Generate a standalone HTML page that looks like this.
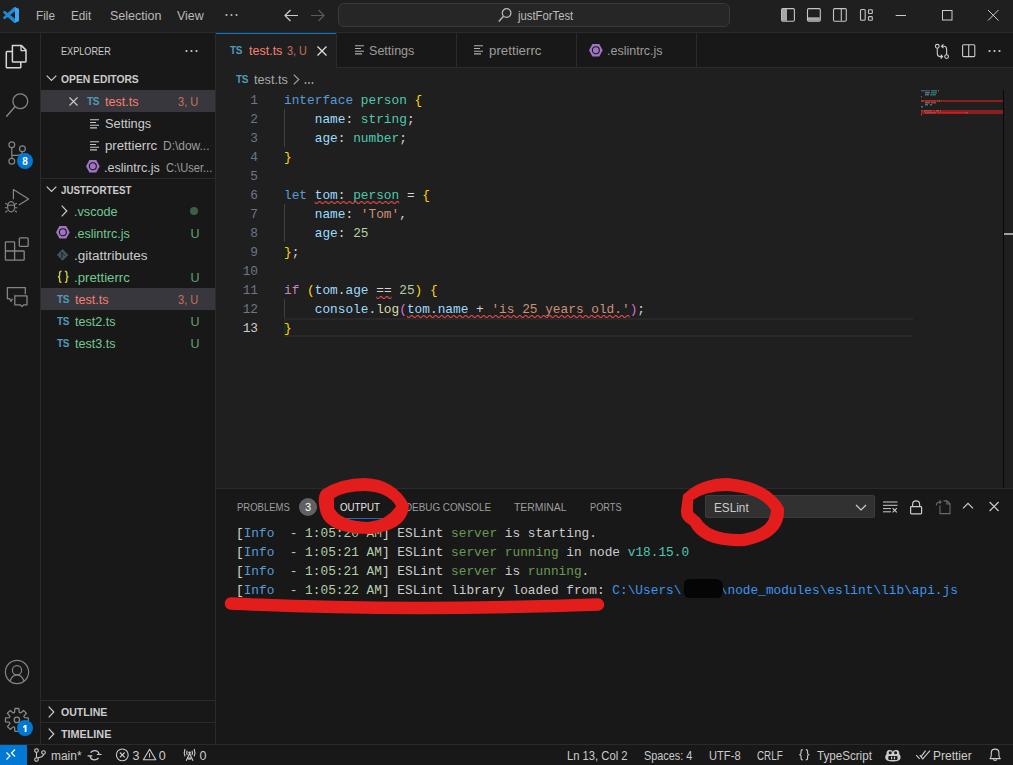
<!DOCTYPE html>
<html><head><meta charset="utf-8">
<style>
*{margin:0;padding:0;box-sizing:border-box}
html,body{width:1013px;height:765px;overflow:hidden;background:#181818;font-family:"Liberation Sans",sans-serif;color:#cccccc}
.a{position:absolute}
.t{position:absolute;white-space:nowrap;font-size:12.5px;line-height:16px}
.mono{position:absolute;font-family:"Liberation Mono",monospace;font-size:12.8px;line-height:19px;white-space:pre}
svg{position:absolute;overflow:visible}
.kw{color:#569cd6}.ty{color:#4ec9b0}.va{color:#9cdcfe}.br{color:#ffd700}.pa{color:#da70d6}.st{color:#ce9178}.nu{color:#b5cea8}.ct{color:#c586c0}.fn{color:#dcdcaa}.op{color:#d4d4d4}
.sq{}
</style></head><body>
<div class="a" style="left:0px;top:0px;width:1013px;height:32px;background:#1f1f1f;"></div>
<div class="a" style="left:0px;top:32px;width:1013px;height:1px;background:#2b2b2b;"></div>
<div class="a" style="left:0px;top:33px;width:40px;height:711px;background:#181818;"></div>
<div class="a" style="left:40px;top:33px;width:1px;height:711px;background:#2b2b2b;"></div>
<div class="a" style="left:41px;top:33px;width:174px;height:711px;background:#181818;"></div>
<div class="a" style="left:215px;top:33px;width:1px;height:711px;background:#2b2b2b;"></div>
<div class="a" style="left:216px;top:33px;width:797px;height:34px;background:#181818;"></div>
<div class="a" style="left:216px;top:67px;width:797px;height:1px;background:#2b2b2b;"></div>
<div class="a" style="left:216px;top:68px;width:797px;height:420px;background:#1f1f1f;"></div>
<div class="a" style="left:216px;top:488px;width:797px;height:1px;background:#2b2b2b;"></div>
<div class="a" style="left:216px;top:489px;width:797px;height:255px;background:#181818;"></div>
<div class="a" style="left:0px;top:744px;width:1013px;height:1px;background:#2b2b2b;"></div>
<div class="a" style="left:0px;top:745px;width:1013px;height:20px;background:#181818;"></div>
<svg style="left:3px;top:7px" width="16" height="16" viewBox="0 0 100 100">
<path d="M96.46 10.8L75.86.87a6.23 6.23 0 0 0-7.1 1.21L29.55 37.85 12.47 24.88a4.16 4.16 0 0 0-5.32.24l-5.48 4.99a4.17 4.17 0 0 0 0 6.16L16.49 50 1.67 63.52a4.17 4.17 0 0 0 0 6.160l5.48 4.99a4.16 4.16 0 0 0 5.32.24l17.08-12.97 39.21 35.78a6.22 6.22 0 0 0 7.1 1.2l20.6-9.92A6.25 6.25 0 0 0 100 83.4V16.6a6.25 6.25 0 0 0-3.54-5.63zM75.02 72.7L45.28 50l29.74-22.7v45.4z" fill="#1f8ad2"/>
<path d="M75.86 .87 L96.46 10.8 A6.25 6.25 0 0 1 100 16.6 V83.4 A6.25 6.25 0 0 1 96.46 89.2 L75.86 99.13 A6.22 6.22 0 0 1 68.76 97.93 A4 4 0 0 0 75.02 94 V6 A4 4 0 0 0 68.76 2.08 A6.23 6.23 0 0 1 75.86 .87Z" fill="#3aa5f0"/>
</svg>
<div id="m_file" class="t" style="left:36.37px;top:7.67px;color:#b9b9b9;font-size:12.5px;font-weight:400;transform:scaleX(0.9409);transform-origin:0 0;">File</div>
<div id="m_edit" class="t" style="left:71.39px;top:7.67px;color:#b9b9b9;font-size:12.5px;font-weight:400;transform:scaleX(0.9365);transform-origin:0 0;">Edit</div>
<div id="m_sel" class="t" style="left:109.90px;top:7.67px;color:#b9b9b9;font-size:12.5px;font-weight:400;transform:scaleX(1.0002);transform-origin:0 0;">Selection</div>
<div id="m_view" class="t" style="left:177.41px;top:7.67px;color:#b9b9b9;font-size:12.5px;font-weight:400;transform:scaleX(0.9932);transform-origin:0 0;">View</div>
<svg style="left:225px;top:13px" width="14" height="4" viewBox="0 0 14 4"><circle cx="1.5" cy="2" r="1.1" fill="#b9b9b9"/><circle cx="6.5" cy="2" r="1.1" fill="#b9b9b9"/><circle cx="11.5" cy="2" r="1.1" fill="#b9b9b9"/></svg>
<svg style="left:284px;top:9px" width="15" height="13" viewBox="0 0 15 13"><path d="M6.5 1 L1 6.5 L6.5 12 M1 6.5 H14" stroke="#cccccc" stroke-width="1.2" fill="none"/></svg>
<svg style="left:310px;top:9px" width="15" height="13" viewBox="0 0 15 13"><path d="M8.5 1 L14 6.5 L8.5 12 M14 6.5 H1" stroke="#5a5a5a" stroke-width="1.2" fill="none"/></svg>
<div class="a" style="left:338px;top:3px;width:392px;height:24px;background:#262626;border:1px solid #3a3a3a;border-radius:6px;box-sizing:border-box"></div>
<svg style="left:498px;top:8px" width="14" height="14" viewBox="0 0 14 14"><circle cx="8.6" cy="5" r="4.3" stroke="#bbbbbb" stroke-width="1.2" fill="none"/><path d="M5.5 8.2 L0.8 13.5" stroke="#bbbbbb" stroke-width="1.4"/></svg>
<div id="cc" class="t" style="left:517.87px;top:7.67px;color:#bdbdbd;font-size:12.5px;font-weight:400;transform:scaleX(0.9032);transform-origin:0 0;">justForTest</div>
<svg style="left:0;top:0" width="1013" height="40" fill="none"><rect x="781.6" y="8.6" width="12.8" height="12.6" rx="1.2" stroke="#c5c5c5" stroke-width="1.1"/><rect x="782" y="9" width="5" height="11.8" fill="#a8a8a8"/><rect x="807.5" y="8.6" width="12.8" height="12.6" rx="1.2" stroke="#c5c5c5" stroke-width="1.1"/><rect x="808" y="17.3" width="11.8" height="3.5" fill="#a8a8a8"/><rect x="833.5" y="8.6" width="12.8" height="12.6" rx="1.2" stroke="#c5c5c5" stroke-width="1.1"/><path d="M841.3 9 V20.8" stroke="#c5c5c5" stroke-width="1.1"/><rect x="860.5" y="9.5" width="4.7" height="10.8" rx="1" stroke="#c5c5c5" stroke-width="1.1"/><rect x="868.5" y="9.8" width="3.8" height="3.7" rx="0.8" stroke="#c5c5c5" stroke-width="1.1"/><rect x="868.5" y="16.6" width="3.8" height="3.7" rx="0.8" stroke="#c5c5c5" stroke-width="1.1"/></svg>
<svg style="left:0;top:0" width="1013" height="40" fill="none"><path d="M895.7 15.5 H906" stroke="#cccccc" stroke-width="1"/><rect x="942.5" y="10.5" width="9.5" height="9.5" stroke="#cccccc" stroke-width="1"/><path d="M988 10 L998.5 20.5 M998.5 10 L988 20.5" stroke="#cccccc" stroke-width="1"/></svg>
<svg style="left:0;top:0" width="41" height="765" viewBox="0 0 41 765" fill="none" stroke-linejoin="round">
<path d="M12.4 45.6 H21.5 L26 50.1 V61.2 Q26 62 25.2 62 H13.2 Q12.4 62 12.4 61.2 Z" stroke="#d7d7d7" stroke-width="1.5"/>
<path d="M21 45.6 V50.6 H26" stroke="#d7d7d7" stroke-width="1.3"/>
<path d="M12.4 51.6 H7.1 Q6.3 51.6 6.3 52.4 V67 Q6.3 67.8 7.1 67.8 H20 Q20.8 67.8 20.8 67 V62" stroke="#d7d7d7" stroke-width="1.5"/>
<circle cx="20.3" cy="101.2" r="7.4" stroke="#858585" stroke-width="1.3"/>
<path d="M14.9 106.8 L6.6 116.2" stroke="#858585" stroke-width="1.4" stroke-linecap="round"/>
<circle cx="11.8" cy="144.7" r="2.9" stroke="#858585" stroke-width="1.2"/>
<circle cx="11.8" cy="161.2" r="2.9" stroke="#858585" stroke-width="1.2"/>
<circle cx="22.4" cy="148.8" r="2.9" stroke="#858585" stroke-width="1.2"/>
<path d="M11.8 147.6 V158.3 M22.4 151.7 Q22.4 155.3 17 155.3 H12" stroke="#858585" stroke-width="1.2"/>
<path d="M13.4 199.3 V189.6 L28.6 199 L18.9 205.1" stroke="#858585" stroke-width="1.2"/>
<ellipse cx="11.1" cy="206.7" rx="3.5" ry="5.1" stroke="#858585" stroke-width="1.2"/>
<path d="M7.7 205.3 H14.5 M5.3 203.2 L7.6 204.5 M4.9 207.8 H7.5 M5.3 212.3 L7.6 210.6 M16.9 203.2 L14.6 204.5 M17.3 207.8 H14.7 M16.9 212.3 L14.6 210.6" stroke="#858585" stroke-width="1.1"/>
<path d="M6.2 241.8 H13.8 Q14.6 241.8 14.6 242.6 V251 H23.4 Q24.2 251 24.2 251.8 V259.4 Q24.2 260.2 23.4 260.2 H6.2 Q5.4 260.2 5.4 259.4 V242.6 Q5.4 241.8 6.2 241.8 Z M5.4 251 H14.6 V260.2" stroke="#858585" stroke-width="1.3"/>
<rect x="19.3" y="237.8" width="8.9" height="8.6" rx="1" stroke="#858585" stroke-width="1.3"/>
<path d="M14.3 294.5 V294.8 M25.3 294.3 V287.6 H7.4 V298.7 H9.6 L10.9 301.3 L12.5 298.7" stroke="#858585" stroke-width="1.3"/>
<path d="M14.8 295.8 H27 V304.8 H23.8 L22 306.6 L20.2 304.8 H14.8 Z" stroke="#858585" stroke-width="1.3"/>
<circle cx="17" cy="672" r="11.6" stroke="#858585" stroke-width="1.2"/>
<circle cx="17" cy="670.3" r="4.6" stroke="#858585" stroke-width="1.2"/>
<path d="M10 681.3 Q12 674.8 17 674.8 Q22 674.8 24 681.3" stroke="#858585" stroke-width="1.2"/>
<path d="M14.59 712.35 L14.89 708.48 L18.91 708.48 L19.21 712.35 L20.61 712.92 L23.55 710.40 L26.40 713.25 L23.88 716.19 L24.45 717.59 L28.32 717.89 L28.32 721.91 L24.45 722.21 L23.88 723.61 L26.40 726.55 L23.55 729.40 L20.61 726.88 L19.21 727.45 L18.91 731.32 L14.89 731.32 L14.59 727.45 L13.19 726.88 L10.25 729.40 L7.40 726.55 L9.92 723.61 L9.35 722.21 L5.48 721.91 L5.48 717.89 L9.35 717.59 L9.92 716.19 L7.40 713.25 L10.25 710.40 L13.19 712.92 Z" stroke="#858585" stroke-width="1.3"/>
<circle cx="16.9" cy="719.9" r="2.7" stroke="#858585" stroke-width="1.3"/>
</svg>
<div class="a" style="left:17px;top:153px;width:16px;height:16px;border-radius:8px;background:#0078d4;color:#fff;font-size:10px;font-weight:bold;text-align:center;line-height:17px">8</div>
<svg style="left:0;top:0" width="41" height="765"><circle cx="25" cy="728" r="8" fill="#0078d4"/><path d="M24.7 725.1 H26.5 V732 H24.7 V727.2 L23.2 728 V726.4 Z" fill="#ffffff"/></svg>
<div id="s_expl" class="t" style="left:60.95px;top:43.19px;color:#cccccc;font-size:11px;font-weight:400;transform:scaleX(0.8301);transform-origin:0 0;">EXPLORER</div>
<svg style="left:185px;top:49px" width="14" height="4" viewBox="0 0 14 4"><circle cx="1.5" cy="2" r="1.1" fill="#cccccc"/><circle cx="6.5" cy="2" r="1.1" fill="#cccccc"/><circle cx="11.5" cy="2" r="1.1" fill="#cccccc"/></svg>
<svg style="left:46px;top:75px" width="11" height="7" viewBox="0 0 11 7"><path d="M0.7 0.7 L5.5 5.5 L10.3 0.7" stroke="#cccccc" stroke-width="1.2" fill="none"/></svg>
<div id="s_oe" class="t" style="left:60.92px;top:71.19px;color:#cccccc;font-size:11px;font-weight:700;transform:scaleX(0.9374);transform-origin:0 0;">OPEN EDITORS</div>
<div class="a" style="left:41px;top:90px;width:174px;height:22px;background:#37373d;"></div>
<svg style="left:69px;top:97px" width="9" height="9" viewBox="0 0 9 9"><path d="M0.5 0.5 L8.5 8.5 M8.5 0.5 L0.5 8.5" stroke="#cccccc" stroke-width="1.1"/></svg>
<div class="a" style="left:87px;top:96px;font-size:10px;font-weight:bold;color:#519aba;letter-spacing:-0.4px;line-height:12px">TS</div>
<div id="s_r1" class="t" style="left:104.89px;top:93.67px;color:#f88070;font-size:12.5px;font-weight:400;transform:scaleX(1.0062);transform-origin:0 0;">test.ts</div>
<div id="s_r1b" class="t" style="left:178.47px;top:93.67px;color:#c9705f;font-size:12.5px;font-weight:400;transform:scaleX(0.8832);transform-origin:0 0;">3, U</div>
<svg style="left:90px;top:119px" width="10" height="10" viewBox="0 0 10 10"><path d="M0 0.8 H9 M0 3.5 H6 M0 6.2 H9 M0 8.9 H7" stroke="#c5c5c5" stroke-width="1.1"/></svg>
<div id="s_r2" class="t" style="left:105.39px;top:115.67px;color:#cccccc;font-size:12.5px;font-weight:400;transform:scaleX(1.0222);transform-origin:0 0;">Settings</div>
<svg style="left:90px;top:141px" width="10" height="10" viewBox="0 0 10 10"><path d="M0 0.8 H9 M0 3.5 H6 M0 6.2 H9 M0 8.9 H7" stroke="#c5c5c5" stroke-width="1.1"/></svg>
<div id="s_r3" class="t" style="left:105.39px;top:137.67px;color:#cccccc;font-size:12.5px;font-weight:400;transform:scaleX(1.0573);transform-origin:0 0;">prettierrc</div>
<div id="s_r3d" class="t" style="left:163.41px;top:137.84px;color:#9d9d9d;font-size:12px;font-weight:400;transform:scaleX(0.9959);transform-origin:0 0;">D:\dow...</div>
<svg style="left:86px;top:160px" width="14" height="13" viewBox="0 0 14 13"><path d="M3.4 0 H10.3 L13.7 6.2 L10.3 12.4 H3.4 L0 6.2 Z" fill="#a074c4" /><circle cx="6.85" cy="6.2" r="3.5" fill="none" stroke="#181818" stroke-width="1.1"/></svg>
<div id="s_r4" class="t" style="left:104.38px;top:159.67px;color:#cccccc;font-size:12.5px;font-weight:400;transform:scaleX(1.0038);transform-origin:0 0;">.eslintrc.js</div>
<div id="s_r4d" class="t" style="left:166.49px;top:159.84px;color:#9d9d9d;font-size:12px;font-weight:400;transform:scaleX(0.9248);transform-origin:0 0;">C:\User...</div>
<div class="a" style="left:41px;top:178px;width:174px;height:1px;background:#2b2b2b;"></div>
<svg style="left:46px;top:186px" width="11" height="7" viewBox="0 0 11 7"><path d="M0.7 0.7 L5.5 5.5 L10.3 0.7" stroke="#cccccc" stroke-width="1.2" fill="none"/></svg>
<div id="s_jft" class="t" style="left:61.47px;top:182.19px;color:#cccccc;font-size:11px;font-weight:700;transform:scaleX(0.8862);transform-origin:0 0;">JUSTFORTEST</div>
<svg style="left:61px;top:205px" width="7" height="12" viewBox="0 0 7 12"><path d="M0.7 0.7 L5.8 6 L0.7 11.3" stroke="#cccccc" stroke-width="1.2" fill="none"/></svg>
<div id="s_t1" class="t" style="left:73.90px;top:203.67px;color:#73c991;font-size:12.5px;font-weight:400;transform:scaleX(1.0098);transform-origin:0 0;">.vscode</div>
<div class="a" style="left:190px;top:207px;width:8px;height:8px;background:#3a5f46;border-radius:4px"></div>
<svg style="left:56px;top:226px" width="14" height="13" viewBox="0 0 14 13"><path d="M3.4 0 H10.3 L13.7 6.2 L10.3 12.4 H3.4 L0 6.2 Z" fill="#a074c4" /><circle cx="6.85" cy="6.2" r="3.5" fill="none" stroke="#181818" stroke-width="1.1"/></svg>
<div id="s_t2" class="t" style="left:74.38px;top:225.67px;color:#73c991;font-size:12.5px;font-weight:400;transform:scaleX(1.0038);transform-origin:0 0;">.eslintrc.js</div>
<div id="s_t2b" class="t" style="left:190.40px;top:225.67px;color:#5fa275;font-size:12.5px;font-weight:400;">U</div>
<svg style="left:0;top:0" width="100" height="300"><path d="M62.6 249 L68.4 254.9 L62.6 260.8 L56.8 254.9 Z" fill="#41535b"/><path d="M61.8 252 V258 M62.2 253 L64.8 255.6" stroke="#181818" stroke-width="0.9"/></svg>
<div id="s_t3" class="t" style="left:74.32px;top:247.67px;color:#cccccc;font-size:12.5px;font-weight:400;transform:scaleX(1.0793);transform-origin:0 0;">.gitattributes</div>
<svg style="left:0;top:0" width="100" height="300" fill="none"><path d="M61.5 271.3 Q59.6 271.3 59.6 273.2 V275.4 Q59.6 276.8 57.9 276.8 Q59.6 276.8 59.6 278.2 V280.5 Q59.6 282.4 61.5 282.4 M64.9 271.3 Q66.8 271.3 66.8 273.2 V275.4 Q66.8 276.8 68.5 276.8 Q66.8 276.8 66.8 278.2 V280.5 Q66.8 282.4 64.9 282.4" stroke="#cbcb41" stroke-width="1.4"/></svg>
<div id="s_t4" class="t" style="left:74.36px;top:269.67px;color:#73c991;font-size:12.5px;font-weight:400;transform:scaleX(1.0580);transform-origin:0 0;">.prettierrc</div>
<div id="s_t4b" class="t" style="left:190.40px;top:269.67px;color:#5fa275;font-size:12.5px;font-weight:400;">U</div>
<div class="a" style="left:41px;top:288px;width:174px;height:22px;background:#37373d;"></div>
<div class="a" style="left:57px;top:294px;font-size:10px;font-weight:bold;color:#519aba;letter-spacing:-0.4px;line-height:12px">TS</div>
<div id="s_t5" class="t" style="left:75.39px;top:291.67px;color:#f88070;font-size:12.5px;font-weight:400;transform:scaleX(1.0062);transform-origin:0 0;">test.ts</div>
<div id="s_t5b" class="t" style="left:178.47px;top:291.67px;color:#c9705f;font-size:12.5px;font-weight:400;transform:scaleX(0.8832);transform-origin:0 0;">3, U</div>
<div class="a" style="left:57px;top:316px;font-size:10px;font-weight:bold;color:#519aba;letter-spacing:-0.4px;line-height:12px">TS</div>
<div id="s_t6" class="t" style="left:75.40px;top:313.67px;color:#73c991;font-size:12.5px;font-weight:400;transform:scaleX(1.0051);transform-origin:0 0;">test2.ts</div>
<div id="s_t6b" class="t" style="left:190.40px;top:313.67px;color:#5fa275;font-size:12.5px;font-weight:400;">U</div>
<div class="a" style="left:57px;top:338px;font-size:10px;font-weight:bold;color:#519aba;letter-spacing:-0.4px;line-height:12px">TS</div>
<div id="s_t7" class="t" style="left:75.40px;top:335.67px;color:#73c991;font-size:12.5px;font-weight:400;transform:scaleX(1.0051);transform-origin:0 0;">test3.ts</div>
<div id="s_t7b" class="t" style="left:190.40px;top:335.67px;color:#5fa275;font-size:12.5px;font-weight:400;">U</div>
<div class="a" style="left:41px;top:700px;width:174px;height:1px;background:#2b2b2b;"></div>
<svg style="left:48px;top:706px" width="7" height="12" viewBox="0 0 7 12"><path d="M0.7 0.7 L5.8 6 L0.7 11.3" stroke="#cccccc" stroke-width="1.2" fill="none"/></svg>
<div id="s_outl" class="t" style="left:61.39px;top:704.19px;color:#cccccc;font-size:11px;font-weight:700;transform:scaleX(0.9597);transform-origin:0 0;">OUTLINE</div>
<div class="a" style="left:41px;top:722px;width:174px;height:1px;background:#2b2b2b;"></div>
<svg style="left:48px;top:728px" width="7" height="12" viewBox="0 0 7 12"><path d="M0.7 0.7 L5.8 6 L0.7 11.3" stroke="#cccccc" stroke-width="1.2" fill="none"/></svg>
<div id="s_tl" class="t" style="left:61.39px;top:726.19px;color:#cccccc;font-size:11px;font-weight:700;transform:scaleX(0.9811);transform-origin:0 0;">TIMELINE</div>
<div class="a" style="left:216px;top:33px;width:120px;height:35px;background:#1f1f1f;border-top:1px solid #0078d4;box-sizing:border-box"></div>
<div class="a" style="left:336px;top:33px;width:1px;height:34px;background:#2b2b2b;"></div>
<div class="a" style="left:456px;top:33px;width:1px;height:34px;background:#2b2b2b;"></div>
<div class="a" style="left:576px;top:33px;width:1px;height:34px;background:#2b2b2b;"></div>
<div class="a" style="left:696px;top:33px;width:1px;height:34px;background:#2b2b2b;"></div>
<div class="a" style="left:230px;top:45px;font-size:10px;font-weight:bold;color:#519aba;letter-spacing:-0.4px;line-height:12px">TS</div>
<div id="tab1" class="t" style="left:248.88px;top:43.37px;color:#f88070;font-size:12.5px;font-weight:400;transform:scaleX(1.0006);transform-origin:0 0;">test.ts</div>
<div id="tab1b" class="t" style="left:287.44px;top:43.37px;color:#c9705f;font-size:12.5px;font-weight:400;transform:scaleX(0.8658);transform-origin:0 0;">3, U</div>
<svg style="left:317px;top:46px" width="10" height="10" viewBox="0 0 10 10"><path d="M0.5 0.5 L9.5 9.5 M9.5 0.5 L0.5 9.5" stroke="#e0e0e0" stroke-width="1.3"/></svg>
<svg style="left:355px;top:45px" width="10" height="10" viewBox="0 0 10 10"><path d="M0 0.8 H9 M0 3.5 H6 M0 6.2 H9 M0 8.9 H7" stroke="#b0b0b0" stroke-width="1.1"/></svg>
<div id="tab2" class="t" style="left:368.90px;top:43.37px;color:#9d9d9d;font-size:12.5px;font-weight:400;transform:scaleX(1.0047);transform-origin:0 0;">Settings</div>
<svg style="left:474px;top:45px" width="10" height="10" viewBox="0 0 10 10"><path d="M0 0.8 H9 M0 3.5 H6 M0 6.2 H9 M0 8.9 H7" stroke="#b0b0b0" stroke-width="1.1"/></svg>
<div id="tab3" class="t" style="left:489.42px;top:43.37px;color:#9d9d9d;font-size:12.5px;font-weight:400;transform:scaleX(1.0646);transform-origin:0 0;">prettierrc</div>
<svg style="left:589px;top:44px" width="14" height="13" viewBox="0 0 14 13"><path d="M3.4 0 H10.3 L13.7 6.2 L10.3 12.4 H3.4 L0 6.2 Z" fill="#a074c4" /><circle cx="6.85" cy="6.2" r="3.5" fill="none" stroke="#181818" stroke-width="1.1"/></svg>
<div id="tab4" class="t" style="left:607.41px;top:43.37px;color:#9d9d9d;font-size:12.5px;font-weight:400;transform:scaleX(1.0003);transform-origin:0 0;">.eslintrc.js</div>
<svg style="left:0;top:0" width="1013" height="100" fill="none"><circle cx="937.3" cy="46.3" r="1.9" stroke="#cccccc" stroke-width="1.1"/><circle cx="946.6" cy="56.6" r="1.9" stroke="#cccccc" stroke-width="1.1"/><path d="M937.3 48.2 V53.6 Q937.3 56.6 939.9 56.6 H942.6 M940.7 54.7 L942.6 56.6 L940.7 58.5 M946.6 54.7 V49.3 Q946.6 46.3 944 46.3 H941.5 M943.4 44.4 L941.5 46.3 L943.4 48.2" stroke="#cccccc" stroke-width="1.1"/><rect x="962.6" y="44.7" width="12.2" height="11.9" rx="1" stroke="#cccccc" stroke-width="1.1"/><path d="M968.7 45 V56.4" stroke="#cccccc" stroke-width="1.1"/></svg>
<svg style="left:987.6px;top:48.8px" width="14" height="4" viewBox="0 0 14 4"><circle cx="1.5" cy="2" r="1.1" fill="#cccccc"/><circle cx="6.5" cy="2" r="1.1" fill="#cccccc"/><circle cx="11.5" cy="2" r="1.1" fill="#cccccc"/></svg>
<div class="a" style="left:236px;top:74px;font-size:10px;font-weight:bold;color:#519aba;letter-spacing:-0.4px;line-height:12px">TS</div>
<div id="bc1" class="t" style="left:254.42px;top:71.67px;color:#a9a9a9;font-size:12.5px;font-weight:400;transform:scaleX(1.0125);transform-origin:0 0;">test.ts</div>
<svg style="left:293px;top:74px" width="7" height="11" viewBox="0 0 7 11"><path d="M0.7 0.7 L5.8 5.5 L0.7 10.3" stroke="#a9a9a9" stroke-width="1.1" fill="none"/></svg>
<svg style="left:304px;top:81px" width="14" height="4" viewBox="0 0 14 4"><circle cx="1.5" cy="2" r="0.9" fill="#a9a9a9"/><circle cx="5.0" cy="2" r="0.9" fill="#a9a9a9"/><circle cx="8.5" cy="2" r="0.9" fill="#a9a9a9"/></svg>
<div class="a" style="left:284px;top:318px;width:629px;height:19px;border:2px solid #282828;border-right:none"></div>
<div class="a" style="left:284px;top:109px;width:1px;height:38px;background:#404040;"></div>
<div class="a" style="left:284px;top:204px;width:1px;height:38px;background:#404040;"></div>
<div class="a" style="left:284px;top:299px;width:1px;height:19px;background:#404040;"></div>
<div class="mono" style="left:216px;top:91px;width:42px;text-align:right;color:#6e7681">1</div>
<div class="mono" style="left:284px;top:91px"><span class="kw">interface</span> <span class="ty">person</span> <span class="br">{</span></div>
<div class="mono" style="left:216px;top:110px;width:42px;text-align:right;color:#6e7681">2</div>
<div class="mono" style="left:284px;top:110px">    <span class="va">name</span><span class="op">:</span> <span class="ty">string</span><span class="op">;</span></div>
<div class="mono" style="left:216px;top:129px;width:42px;text-align:right;color:#6e7681">3</div>
<div class="mono" style="left:284px;top:129px">    <span class="va">age</span><span class="op">:</span> <span class="ty">number</span><span class="op">;</span></div>
<div class="mono" style="left:216px;top:148px;width:42px;text-align:right;color:#6e7681">4</div>
<div class="mono" style="left:284px;top:148px"><span class="br">}</span></div>
<div class="mono" style="left:216px;top:167px;width:42px;text-align:right;color:#6e7681">5</div>
<div class="mono" style="left:284px;top:167px"></div>
<div class="mono" style="left:216px;top:186px;width:42px;text-align:right;color:#6e7681">6</div>
<div class="mono" style="left:284px;top:186px"><span class="kw">let</span> <span class="sq"><span class="va">tom</span><span class="op">:</span> <span class="ty">person</span></span> <span class="op">=</span> <span class="br">{</span></div>
<div class="mono" style="left:216px;top:205px;width:42px;text-align:right;color:#6e7681">7</div>
<div class="mono" style="left:284px;top:205px">    <span class="va">name</span><span class="op">:</span> <span class="st">'Tom'</span><span class="op">,</span></div>
<div class="mono" style="left:216px;top:224px;width:42px;text-align:right;color:#6e7681">8</div>
<div class="mono" style="left:284px;top:224px">    <span class="va">age</span><span class="op">:</span> <span class="nu">25</span></div>
<div class="mono" style="left:216px;top:243px;width:42px;text-align:right;color:#6e7681">9</div>
<div class="mono" style="left:284px;top:243px"><span class="br">}</span><span class="op">;</span></div>
<div class="mono" style="left:216px;top:262px;width:42px;text-align:right;color:#6e7681">10</div>
<div class="mono" style="left:284px;top:262px"></div>
<div class="mono" style="left:216px;top:281px;width:42px;text-align:right;color:#6e7681">11</div>
<div class="mono" style="left:284px;top:281px"><span class="ct">if</span> <span class="br">(</span><span class="va">tom</span><span class="op">.</span><span class="va">age</span> <span class="sq"><span class="op">==</span></span> <span class="nu">25</span><span class="br">)</span> <span class="br">{</span></div>
<div class="mono" style="left:216px;top:300px;width:42px;text-align:right;color:#6e7681">12</div>
<div class="mono" style="left:284px;top:300px">    <span class="va">console</span><span class="op">.</span><span class="fn">log</span><span class="pa">(</span><span class="sq"><span class="va">tom</span><span class="op">.</span><span class="va">name</span> <span class="op">+</span> <span class="st">'is 25 years old.'</span></span><span class="pa">)</span><span class="op">;</span></div>
<div class="mono" style="left:216px;top:319px;width:42px;text-align:right;color:#cccccc">13</div>
<div class="mono" style="left:284px;top:319px"><span class="br">}</span></div>
<svg style="left:0;top:0" width="1013" height="765"><defs><pattern id="sqp" x="0" y="0" width="6" height="3" patternUnits="userSpaceOnUse"><polygon points="5.5,0 2.5,3 1.1,3 4.1,0" fill="#f14c4c"/><polygon points="4,0 6,2 6,0.6 5.4,0" fill="#f14c4c"/><polygon points="0,2 1,3 2.4,3 0,0.6" fill="#f14c4c"/></pattern></defs><g transform="translate(314.7,201)"><rect x="0" y="0" width="84.5" height="3" fill="url(#sqp)"/></g><g transform="translate(376.2,296)"><rect x="0" y="0" width="15.4" height="3" fill="url(#sqp)"/></g><g transform="translate(406.9,315)"><rect x="0" y="0" width="222.7" height="3" fill="url(#sqp)"/></g></svg>
<div class="a" style="left:921px;top:100px;width:82px;height:2px;background:#8b1f1f;"></div>
<div class="a" style="left:921px;top:110px;width:82px;height:4px;background:#8b1f1f;"></div>
<div class="a" style="left:921px;top:90px;width:9px;height:1px;background:#3f6a94;opacity:0.75"></div>
<div class="a" style="left:921px;top:91px;width:9px;height:1px;background:#3f6a94;opacity:0.35"></div>
<div class="a" style="left:931px;top:90px;width:6px;height:1px;background:#3a8a78;opacity:0.75"></div>
<div class="a" style="left:931px;top:91px;width:6px;height:1px;background:#3a8a78;opacity:0.35"></div>
<div class="a" style="left:938px;top:90px;width:1px;height:1px;background:#8f8a40;opacity:0.75"></div>
<div class="a" style="left:938px;top:91px;width:1px;height:1px;background:#8f8a40;opacity:0.35"></div>
<div class="a" style="left:925px;top:92px;width:4px;height:1px;background:#6890a8;opacity:0.75"></div>
<div class="a" style="left:925px;top:93px;width:4px;height:1px;background:#6890a8;opacity:0.35"></div>
<div class="a" style="left:929px;top:92px;width:1px;height:1px;background:#777;opacity:0.75"></div>
<div class="a" style="left:929px;top:93px;width:1px;height:1px;background:#777;opacity:0.35"></div>
<div class="a" style="left:931px;top:92px;width:6px;height:1px;background:#3a8a78;opacity:0.75"></div>
<div class="a" style="left:931px;top:93px;width:6px;height:1px;background:#3a8a78;opacity:0.35"></div>
<div class="a" style="left:925px;top:94px;width:3px;height:1px;background:#6890a8;opacity:0.75"></div>
<div class="a" style="left:925px;top:95px;width:3px;height:1px;background:#6890a8;opacity:0.35"></div>
<div class="a" style="left:928px;top:94px;width:1px;height:1px;background:#777;opacity:0.75"></div>
<div class="a" style="left:928px;top:95px;width:1px;height:1px;background:#777;opacity:0.35"></div>
<div class="a" style="left:930px;top:94px;width:6px;height:1px;background:#3a8a78;opacity:0.75"></div>
<div class="a" style="left:930px;top:95px;width:6px;height:1px;background:#3a8a78;opacity:0.35"></div>
<div class="a" style="left:921px;top:96px;width:1px;height:1px;background:#8f8a40;opacity:0.75"></div>
<div class="a" style="left:921px;top:97px;width:1px;height:1px;background:#8f8a40;opacity:0.35"></div>
<div class="a" style="left:921px;top:100px;width:3px;height:1px;background:#b04040;opacity:0.75"></div>
<div class="a" style="left:921px;top:101px;width:3px;height:1px;background:#b04040;opacity:0.35"></div>
<div class="a" style="left:925px;top:100px;width:11px;height:1px;background:#e02020;opacity:0.75"></div>
<div class="a" style="left:925px;top:101px;width:11px;height:1px;background:#e02020;opacity:0.35"></div>
<div class="a" style="left:937px;top:100px;width:1px;height:1px;background:#a05050;opacity:0.75"></div>
<div class="a" style="left:937px;top:101px;width:1px;height:1px;background:#a05050;opacity:0.35"></div>
<div class="a" style="left:939px;top:100px;width:1px;height:1px;background:#a08030;opacity:0.75"></div>
<div class="a" style="left:939px;top:101px;width:1px;height:1px;background:#a08030;opacity:0.35"></div>
<div class="a" style="left:925px;top:102px;width:4px;height:1px;background:#6890a8;opacity:0.75"></div>
<div class="a" style="left:925px;top:103px;width:4px;height:1px;background:#6890a8;opacity:0.35"></div>
<div class="a" style="left:929px;top:102px;width:1px;height:1px;background:#777;opacity:0.75"></div>
<div class="a" style="left:929px;top:103px;width:1px;height:1px;background:#777;opacity:0.35"></div>
<div class="a" style="left:931px;top:102px;width:5px;height:1px;background:#9a6a50;opacity:0.75"></div>
<div class="a" style="left:931px;top:103px;width:5px;height:1px;background:#9a6a50;opacity:0.35"></div>
<div class="a" style="left:925px;top:104px;width:3px;height:1px;background:#6890a8;opacity:0.75"></div>
<div class="a" style="left:925px;top:105px;width:3px;height:1px;background:#6890a8;opacity:0.35"></div>
<div class="a" style="left:930px;top:104px;width:2px;height:1px;background:#7a8a6a;opacity:0.75"></div>
<div class="a" style="left:930px;top:105px;width:2px;height:1px;background:#7a8a6a;opacity:0.35"></div>
<div class="a" style="left:921px;top:106px;width:2px;height:1px;background:#8f8a40;opacity:0.75"></div>
<div class="a" style="left:921px;top:107px;width:2px;height:1px;background:#8f8a40;opacity:0.35"></div>
<div class="a" style="left:921px;top:110px;width:2px;height:1px;background:#a04060;opacity:0.75"></div>
<div class="a" style="left:921px;top:111px;width:2px;height:1px;background:#a04060;opacity:0.35"></div>
<div class="a" style="left:924px;top:110px;width:1px;height:1px;background:#a08030;opacity:0.75"></div>
<div class="a" style="left:924px;top:111px;width:1px;height:1px;background:#a08030;opacity:0.35"></div>
<div class="a" style="left:925px;top:110px;width:7px;height:1px;background:#b05050;opacity:0.75"></div>
<div class="a" style="left:925px;top:111px;width:7px;height:1px;background:#b05050;opacity:0.35"></div>
<div class="a" style="left:933px;top:110px;width:2px;height:1px;background:#e02020;opacity:0.75"></div>
<div class="a" style="left:933px;top:111px;width:2px;height:1px;background:#e02020;opacity:0.35"></div>
<div class="a" style="left:936px;top:110px;width:3px;height:1px;background:#b06050;opacity:0.75"></div>
<div class="a" style="left:936px;top:111px;width:3px;height:1px;background:#b06050;opacity:0.35"></div>
<div class="a" style="left:940px;top:110px;width:1px;height:1px;background:#a08030;opacity:0.75"></div>
<div class="a" style="left:940px;top:111px;width:1px;height:1px;background:#a08030;opacity:0.35"></div>
<div class="a" style="left:925px;top:112px;width:11px;height:1px;background:#b05050;opacity:0.75"></div>
<div class="a" style="left:925px;top:113px;width:11px;height:1px;background:#b05050;opacity:0.35"></div>
<div class="a" style="left:937px;top:112px;width:29px;height:1px;background:#e02020;opacity:0.75"></div>
<div class="a" style="left:937px;top:113px;width:29px;height:1px;background:#e02020;opacity:0.35"></div>
<div class="a" style="left:966px;top:112px;width:2px;height:1px;background:#a06060;opacity:0.75"></div>
<div class="a" style="left:966px;top:113px;width:2px;height:1px;background:#a06060;opacity:0.35"></div>
<div class="a" style="left:921px;top:114px;width:1px;height:1px;background:#8f8a40;opacity:0.75"></div>
<div class="a" style="left:921px;top:115px;width:1px;height:1px;background:#8f8a40;opacity:0.35"></div>
<div class="a" style="left:1003px;top:90px;width:1px;height:398px;background:#06080b;"></div>
<div class="a" style="left:1004px;top:233px;width:9px;height:2px;background:#a0a0a0;"></div>
<div id="p_prob" class="t" style="left:236.93px;top:499.19px;color:#9d9d9d;font-size:11px;font-weight:400;transform:scaleX(0.8639);transform-origin:0 0;">PROBLEMS</div>
<div class="a" style="left:299px;top:498px;width:18px;height:18px;border-radius:9px;background:#616161;color:#fff;font-size:11px;text-align:center;line-height:18px">3</div>
<div id="p_out" class="t" style="left:340.00px;top:499.19px;color:#e7e7e7;font-size:11px;font-weight:400;transform:scaleX(0.8850);transform-origin:0 0;">OUTPUT</div>
<div class="a" style="left:338px;top:518px;width:45px;height:1px;background:#0078d4;"></div>
<div id="p_dbg" class="t" style="left:405.00px;top:499.19px;color:#9d9d9d;font-size:11px;font-weight:400;transform:scaleX(0.8960);transform-origin:0 0;">DEBUG CONSOLE</div>
<div id="p_term" class="t" style="left:514.43px;top:499.19px;color:#9d9d9d;font-size:11px;font-weight:400;transform:scaleX(0.9455);transform-origin:0 0;">TERMINAL</div>
<div id="p_ports" class="t" style="left:590.47px;top:499.19px;color:#9d9d9d;font-size:11px;font-weight:400;transform:scaleX(0.8387);transform-origin:0 0;">PORTS</div>
<div class="a" style="left:705px;top:495px;width:170px;height:23px;background:#313131;border:1px solid #3c3c3c;border-radius:2px;box-sizing:border-box"></div>
<div id="p_esl" class="t" style="left:713.93px;top:499.67px;color:#cccccc;font-size:12.5px;font-weight:400;transform:scaleX(0.9408);transform-origin:0 0;">ESLint</div>
<svg style="left:0;top:0" width="1013" height="765" fill="none">
<path d="M856 505 L861 510 L866 505" stroke="#cccccc" stroke-width="1.2"/>
<path d="M883 502 H897.5 M883 505.3 H897.5 M883 508.6 H891 M883 511.8 H891" stroke="#cccccc" stroke-width="1"/>
<path d="M892.6 508.2 L896.8 512.4 M896.8 508.2 L892.6 512.4" stroke="#cccccc" stroke-width="1.1"/>
<path d="M912.6 506.5 V504.2 Q912.6 500.9 916.1 500.9 Q919.6 500.9 919.6 504.2 V506.5" stroke="#cccccc" stroke-width="1.2"/>
<rect x="910.6" y="506.6" width="11" height="7.2" rx="0.8" stroke="#cccccc" stroke-width="1.2"/>
<path d="M940 505.5 V513.6 H950 V503.8 L947 500.9 H943.5 M946.8 501 V504 H950" stroke="#6b6b6b" stroke-width="1.1"/>
<path d="M936.3 505.5 Q936.3 502 940 502 H941 M939.3 500.3 L941.2 502 L939.3 503.7" stroke="#6b6b6b" stroke-width="1.1"/>
<path d="M963 508.3 L968 503.3 L973 508.3" stroke="#cccccc" stroke-width="1.2"/>
<path d="M989.6 502 L998.6 511 M998.6 502 L989.6 511" stroke="#cccccc" stroke-width="1.2"/>
</svg>
<div class="mono" style="left:236px;top:524px;color:#cccccc"><span class="op">[</span><span class="kw">Info</span>  <span class="nu">- 1:05:20 AM</span><span class="op">]</span> ESLint <span style="color:#6a9955">server</span> is starting.</div>
<div class="mono" style="left:236px;top:543px;color:#cccccc"><span class="op">[</span><span class="kw">Info</span>  <span class="nu">- 1:05:21 AM</span><span class="op">]</span> ESLint <span style="color:#6a9955">server</span> <span style="color:#6a9955">running</span> in node <span style="color:#4ec9b0">v18.15.0</span></div>
<div class="mono" style="left:236px;top:562px;color:#cccccc"><span class="op">[</span><span class="kw">Info</span>  <span class="nu">- 1:05:21 AM</span><span class="op">]</span> ESLint <span style="color:#6a9955">server</span> is <span style="color:#6a9955">running</span>.</div>
<div class="mono" style="left:236px;top:581px;color:#cccccc"><span class="op">[</span><span class="kw">Info</span>  <span class="nu">- 1:05:22 AM</span><span class="op">]</span> ESLint library loaded from: <span style="color:#3b96f0">C:\Users\     \node_modules\eslint\lib\api.js</span></div>
<svg style="left:0;top:0" width="1013" height="765" viewBox="0 0 1013 765">
 <path d="M684 586 Q683 579 690 579 L716 579 Q724 580 723 588 Q724 598 716 598 L690 598 Q682 598 684 586 Z" fill="#050505"/>
 <path fill="#e31c1c" fill-rule="evenodd" d="M322 490 Q340 478 365 478 Q395 479 409 505 Q408 530 370 534 Q328 534 321 514 Q316 497 322 490 Z M334 498 Q345 491 365 491 Q388 492 396 506 Q388 520 368 522 Q340 521 334 508 Z"/>
 <path fill="#e31c1c" fill-rule="evenodd" d="M683 495 Q700 478 728 478 Q770 482 784 508 Q786 538 745 546 Q702 548 690 525 Q680 520 681 510 Z M693 500 Q705 491 728 491 Q762 494 771 510 Q770 530 742 534 Q710 535 700 518 L693 512 Z"/>
 <path d="M231 603.5 Q400 612 598 604.5" stroke="#e31c1c" stroke-width="12.5" stroke-linecap="round" fill="none"/>
</svg>
<div class="a" style="left:0px;top:745px;width:27px;height:20px;background:#0078d4;"></div>
<svg style="left:6px;top:749px" width="10" height="12" viewBox="0 0 10 12"><path d="M0.5 3.5 L4 7 L0.5 10.5 M9 0.5 L5.5 4 L9 7.5" stroke="#ffffff" stroke-width="1.2" fill="none"/></svg>
<svg style="left:34px;top:748px" width="12" height="14" viewBox="0 0 12 14"><circle cx="2.5" cy="2.5" r="1.8" stroke="#cccccc" stroke-width="1.1" fill="none"/><circle cx="2.5" cy="11.5" r="1.8" stroke="#cccccc" stroke-width="1.1" fill="none"/><circle cx="9.5" cy="4.5" r="1.8" stroke="#cccccc" stroke-width="1.1" fill="none"/><path d="M2.5 4.3 V9.7 M9.5 6.3 Q9.5 9 3.5 10" stroke="#cccccc" stroke-width="1.1" fill="none"/></svg>
<div id="st_main" class="t" style="left:51.39px;top:747.67px;color:#cccccc;font-size:12.5px;font-weight:400;transform:scaleX(0.9567);transform-origin:0 0;">main*</div>
<svg style="left:0;top:0" width="1013" height="765" fill="none"><path d="M90.6 752.6 Q92.2 750.6 94.6 750.6 Q98.6 750.6 99.2 754.6 M96.9 754.5 H101.6 M98.6 757.9 Q97 759.9 94.6 759.9 Q90.6 759.9 90 755.9 M92.3 755.9 H87.6" stroke="#cccccc" stroke-width="1.2"/></svg>
<svg style="left:0;top:0" width="1013" height="765" fill="none"><circle cx="122.3" cy="754.9" r="5.9" stroke="#cccccc" stroke-width="1.1"/><path d="M119.9 752.5 L124.7 757.3 M124.7 752.5 L119.9 757.3" stroke="#cccccc" stroke-width="1.1"/><path d="M149.6 749.3 L155.8 759.8 H143.4 Z" stroke="#cccccc" stroke-width="1.1" stroke-linejoin="round"/><path d="M149.6 753.2 V757.6" stroke="#cccccc" stroke-width="1"/></svg>
<div id="st_e" class="t" style="left:132.40px;top:747.67px;color:#cccccc;font-size:12.5px;font-weight:400;">3</div>
<div id="st_w" class="t" style="left:158.80px;top:747.67px;color:#cccccc;font-size:12.5px;font-weight:400;">0</div>
<svg style="left:0;top:0" width="1013" height="765" fill="none"><path d="M185 749 Q183.6 752.6 185 756.4 M187.2 750.8 Q186.3 752.9 187.2 755 M194.2 749 Q195.6 752.6 194.2 756.4 M192 750.8 Q192.9 752.9 192 755" stroke="#cccccc" stroke-width="1.1"/><circle cx="189.6" cy="752.6" r="1.2" fill="#cccccc"/><path d="M189.6 753.5 L186.2 760.8 M189.6 753.5 L193 760.8" stroke="#cccccc" stroke-width="1.1"/><rect x="188" y="757.4" width="3.3" height="2.3" fill="#b0b0b0"/></svg>
<div id="st_p" class="t" style="left:199.50px;top:747.67px;color:#cccccc;font-size:12.5px;font-weight:400;">0</div>
<div id="st_ln" class="t" style="left:567.46px;top:747.67px;color:#cccccc;font-size:12.5px;font-weight:400;transform:scaleX(0.8985);transform-origin:0 0;">Ln 13, Col 2</div>
<div id="st_sp" class="t" style="left:644.40px;top:747.67px;color:#cccccc;font-size:12.5px;font-weight:400;transform:scaleX(0.8680);transform-origin:0 0;">Spaces: 4</div>
<div id="st_enc" class="t" style="left:709.46px;top:747.67px;color:#cccccc;font-size:12.5px;font-weight:400;transform:scaleX(0.8917);transform-origin:0 0;">UTF-8</div>
<div id="st_eol" class="t" style="left:756.52px;top:747.67px;color:#cccccc;font-size:12.5px;font-weight:400;transform:scaleX(0.7877);transform-origin:0 0;">CRLF</div>
<svg style="left:0;top:0" width="1013" height="765" fill="none"><path d="M802.8 749.6 Q801 749.6 801 751.3 V753.6 Q801 754.7 799.2 754.7 Q801 754.7 801 755.8 V758.2 Q801 759.9 802.8 759.9 M805.8 749.6 Q807.6 749.6 807.6 751.3 V753.6 Q807.6 754.7 809.4 754.7 Q807.6 754.7 807.6 755.8 V758.2 Q807.6 759.9 805.8 759.9" stroke="#cccccc" stroke-width="1.1"/></svg>
<div id="st_lang" class="t" style="left:817.38px;top:747.67px;color:#cccccc;font-size:12.5px;font-weight:400;transform:scaleX(0.9289);transform-origin:0 0;">TypeScript</div>
<svg style="left:0;top:0" width="1013" height="765"><path d="M886.6 754 Q886 750.4 889.6 750.1 Q892.2 749.9 892.9 751.7 Q893.6 749.9 896.2 750.1 Q899.8 750.4 899.2 754 Q900.6 755 900.6 757.6 Q900.6 761.6 892.9 761.6 Q885.2 761.6 885.2 757.6 Q885.2 755 886.6 754 Z" fill="#cccccc"/><circle cx="890.2" cy="752.8" r="1.5" fill="#181818"/><circle cx="895.6" cy="752.8" r="1.5" fill="#181818"/><rect x="888.3" y="756.1" width="9.2" height="3.8" rx="0.8" fill="#181818"/><rect x="891" y="756.7" width="1.2" height="2.6" fill="#cccccc"/><rect x="893.9" y="756.7" width="1.2" height="2.6" fill="#cccccc"/></svg>
<svg style="left:0;top:0" width="1013" height="765" fill="none"><path d="M916.2 755.2 L919.6 758.8 M921.3 756.4 L925.6 750.6 M919.8 755.2 L922.7 758.8 L930 750.6" stroke="#cccccc" stroke-width="1.1"/></svg>
<div id="st_pr" class="t" style="left:933.01px;top:747.67px;color:#cccccc;font-size:12.5px;font-weight:400;transform:scaleX(0.9603);transform-origin:0 0;">Prettier</div>
<svg style="left:0;top:0" width="1013" height="765" fill="none"><path d="M990 758.6 Q991.3 757.6 991.3 755 V752.6 Q991.3 749.1 995.1 749.1 Q998.9 749.1 998.9 752.6 V755 Q998.9 757.6 1000.3 758.6 Z M993.4 759.7 Q995.1 761.3 996.8 759.7" stroke="#cccccc" stroke-width="1.1" stroke-linejoin="round"/></svg>
</body></html>
